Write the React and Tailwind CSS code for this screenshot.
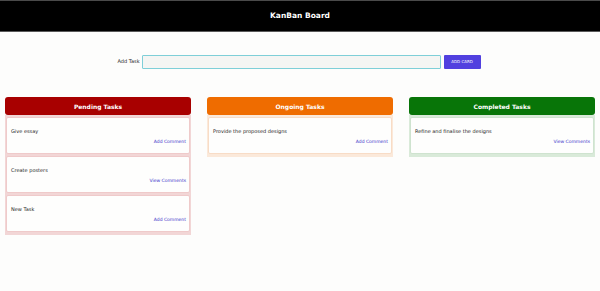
import React, { useState } from 'react';

const columns = [
  {
    title: 'Pending Tasks',
    head: 'bg-[#a80000]',
    body: 'bg-[#f2d6d6]',
    border: 'border-[#efcaca]',
    tasks: [
      { name: 'Give essay', link: 'Add Comment' },
      { name: 'Create posters', link: 'View Comments' },
      { name: 'New Task', link: 'Add Comment' },
    ],
  },
  {
    title: 'Ongoing Tasks',
    head: 'bg-[#ef6c00]',
    body: 'bg-[#fbe9da]',
    border: 'border-[#f8dcc6]',
    tasks: [{ name: 'Provide the proposed designs', link: 'Add Comment' }],
  },
  {
    title: 'Completed Tasks',
    head: 'bg-[#087508]',
    body: 'bg-[#d9ead9]',
    border: 'border-[#cfe3cf]',
    tasks: [{ name: 'Refine and finalise the designs', link: 'View Comments' }],
  },
];

function TaskCard({ task, border }) {
  return (
    <div className={`bg-[#fefefd] border ${border} rounded-[2px] h-[37px] pl-[4px] pr-[3px] pt-[9px]`}>
      <p className="text-[5px] leading-[8px] text-[#222]">{task.name}</p>
      <p className="text-[4.5px] leading-[6px] text-[#3b32c9] text-right mt-[4px]">{task.link}</p>
    </div>
  );
}

export default function App() {
  const [task, setTask] = useState('');

  return (
    <div className="w-[600px] h-[291px] bg-[#fdfdfc] overflow-hidden" style={{ fontFamily: '"DejaVu Sans", Verdana, sans-serif' }}>
      {/* Cabeçalho */}
      <header className="h-[32px] bg-black border-t border-b border-t-[#4a4a4a] border-b-[#5a5a5a] flex items-center justify-center">
        <h1 className="text-white font-bold text-[7.5px]">KanBan Board</h1>
      </header>

      {/* Adicionar tarefa */}
      <div className="flex items-center justify-center mt-[23px] gap-[2px] pr-[2px]">
        <label className="text-[5px] text-[#222]">Add Task</label>
        <input
          type="text"
          value={task}
          onChange={(e) => setTask(e.target.value)}
          className="w-[299px] h-[14px] bg-[#f5f5f3] border border-[#7fcfd8] rounded-[1px] outline-none"
        />
        <button className="w-[37px] h-[14px] ml-[1px] bg-[#5140df] text-white text-[4px] rounded-[1px]">ADD CARD</button>
      </div>

      {/* Colunas */}
      <div className="grid grid-cols-3 gap-[16px] px-[5px] mt-[28px]">
        {columns.map((col) => (
          <div key={col.title}>
            <div className={`${col.head} h-[18px] rounded-[3px] flex items-center justify-center`}>
              <span className="text-white font-bold text-[6px]">{col.title}</span>
            </div>
            <div className={`${col.body} px-[1px] pt-[2px] pb-[3px] flex flex-col gap-[2px]`}>
              {col.tasks.map((t) => (
                <TaskCard key={t.name} task={t} border={col.border} />
              ))}
            </div>
          </div>
        ))}
      </div>
    </div>
  );
}
